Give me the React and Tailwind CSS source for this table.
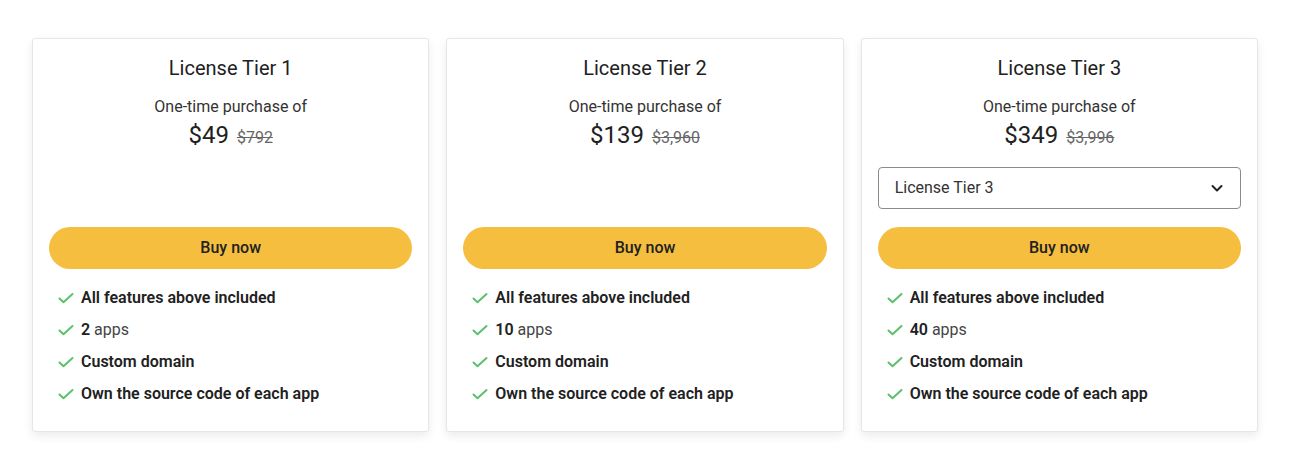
import React from "react";

const tiers = [
  { name: "License Tier 1", price: "$49", old: "$792", apps: "2", select: false },
  { name: "License Tier 2", price: "$139", old: "$3,960", apps: "10", select: false },
  { name: "License Tier 3", price: "$349", old: "$3,996", apps: "40", select: true },
];

function Check() {
  return (
    <svg width="16" height="16" viewBox="0 0 16 16" fill="none" className="shrink-0">
      <path d="M1.5 8.5l4 3.8L14.5 4" stroke="#5cbf6a" strokeWidth="2" strokeLinecap="round" strokeLinejoin="round" />
    </svg>
  );
}

function Feature({ children }) {
  return (
    <li className="flex items-center gap-[7px] h-[32px] pl-[9px]">
      <Check />
      <span className="text-[16px] text-[#212121]">{children}</span>
    </li>
  );
}

export default function App() {
  return (
    <div className="w-[1294px] h-[454px] bg-white" style={{ fontFamily: "Roboto, 'Liberation Sans', sans-serif" }}>
      <div className="grid grid-cols-3 gap-[17px] pl-[32px] pr-[36px] pt-[38px]">
        {tiers.map((t) => (
          <div key={t.name} className="bg-white border border-[#e6e6e6] rounded-[3px] shadow-[0_4px_10px_rgba(0,0,0,0.08)] px-[16px] pt-[15px] pb-[21px]">
            <h2 className="text-center text-[20px] leading-[28px] text-[#212121] font-normal">{t.name}</h2>
            <p className="mt-[14px] text-center text-[16px] leading-[22px] text-[#333]">One-time purchase of</p>
            <div className="mt-[3px] flex items-baseline justify-center gap-[8px] leading-[28px]">
              <span className="text-[24px] text-[#212121]">{t.price}</span>
              <span className="text-[16px] text-[#666] line-through">{t.old}</span>
            </div>
            <div className="mt-[15px] h-[42px]">
              {t.select && (
                <div className="h-[42px] border border-[#8a8a8a] rounded-[4px] flex items-center justify-between pl-[16px] pr-[16px]">
                  <span className="text-[16px] text-[#333]">{t.name}</span>
                  <svg width="14" height="14" viewBox="0 0 14 14" fill="none">
                    <path d="M2.5 5l4.5 4.5L11.5 5" stroke="#212121" strokeWidth="2" strokeLinecap="round" strokeLinejoin="round" />
                  </svg>
                </div>
              )}
            </div>
            <button className="mt-[18px] w-full h-[42px] rounded-full bg-[#f5be3f] text-[16px] font-medium text-[#212121]">
              Buy now
            </button>
            <ul className="mt-[13px]">
              <Feature><span className="font-semibold">All features above included</span></Feature>
              <Feature><span className="font-semibold">{t.apps}</span> <span className="text-[#444]">apps</span></Feature>
              <Feature><span className="font-semibold">Custom domain</span></Feature>
              <Feature><span className="font-semibold">Own the source code of each app</span></Feature>
            </ul>
          </div>
        ))}
      </div>
    </div>
  );
}
